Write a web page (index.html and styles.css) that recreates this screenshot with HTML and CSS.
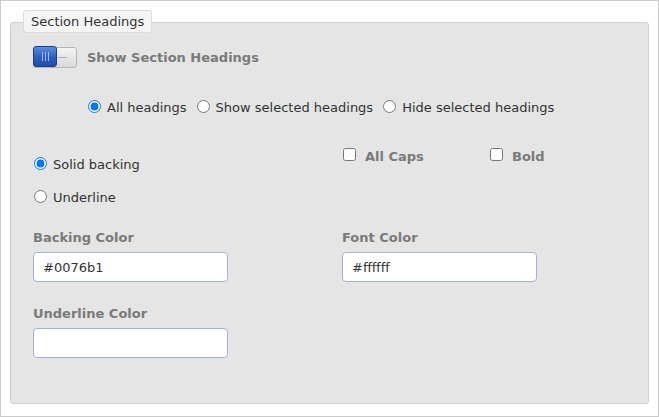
FILE: index.html
```html
<!DOCTYPE html>
<html>
<head>
<meta charset="utf-8">
<link rel="stylesheet" href="styles.css">
</head>
<body>
<div class="frame">
  <div class="legend">Section Headings</div>
  <div class="panel">
    <div class="toggle-row">
      <span class="toggle"><span class="knob"><i></i><i></i><i></i></span><span class="dash"></span></span>
      <span class="bold-label">Show Section Headings</span>
    </div>
    <div class="radio-row">
      <label class="opt"><input type="radio" name="h" checked> All headings</label>
      <label class="opt"><input type="radio" name="h"> Show selected headings</label>
      <label class="opt"><input type="radio" name="h"> Hide selected headings</label>
    </div>
    <div class="grid">
      <div class="col">
        <label class="opt stack first"><input type="radio" name="s" checked> Solid backing</label>
        <label class="opt stack"><input type="radio" name="s"> Underline</label>
      </div>
      <div class="col checks">
        <label class="chk"><input type="checkbox"> <span class="bold-label">All Caps</span></label>
        <label class="chk"><input type="checkbox"> <span class="bold-label">Bold</span></label>
      </div>
      <div class="field">
        <div class="bold-label">Backing Color</div>
        <input class="text" type="text" value="#0076b1">
      </div>
      <div class="field">
        <div class="bold-label">Font Color</div>
        <input class="text" type="text" value="#ffffff">
      </div>
      <div class="field third">
        <div class="bold-label">Underline Color</div>
        <input class="text" type="text" value="">
      </div>
    </div>
  </div>
</div>
</body>
</html>
```
FILE: styles.css
```css
html, body { margin: 0; padding: 0; background: #fff; }
body { font-family: "DejaVu Sans", Verdana, sans-serif; font-size: 13px; color: #333; }
.frame {
  width: 659px; height: 417px; box-sizing: border-box;
  border: 1px solid #ccc; padding: 9px 9px 0 9px;
}
.legend {
  position: relative; z-index: 1;
  display: inline-block; margin-left: 13px;
  height: 21px; line-height: 21px; padding: 0 7px;
  background: #f5f5f5; border: 1px solid #dcdcdc; border-radius: 3px;
  color: #333;
}
.panel {
  margin-top: -11px;
  height: 382px; box-sizing: border-box;
  background: #e5e5e5; border: 1px solid #cfcfcf; border-radius: 3px;
  padding: 23px 22px 0 22px;
}
.toggle-row { display: flex; align-items: center; height: 22px; }
.toggle {
  display: flex; align-items: center;
  width: 44px; height: 21px; box-sizing: border-box;
  border: 1px solid #b5b5b5; border-radius: 3px;
  background: linear-gradient(#f4f4f4, #d9d9d9);
  margin-right: 10px;
}
.knob {
  display: flex; justify-content: center; align-items: center; gap: 2px;
  width: 24px; height: 21px; margin: -1px 0 0 -1px; box-sizing: border-box;
  border: 1px solid #1c3d8c; border-radius: 3px;
  background: linear-gradient(#5c8ee0, #2c5cc0 55%, #1f4ea8);
}
.knob i { display: block; width: 1px; height: 9px; background: #9db8ee; }
.dash { display: block; width: 9px; height: 1px; background: #b0b0b0; margin-left: 1px; }
.bold-label { font-weight: bold; color: #7a7a7a; }
.radio-row { display: flex; margin-top: 29px; padding-left: 54px; gap: 9px; height: 20px; align-items: center; }
.opt { display: inline-flex; align-items: center; white-space: nowrap; }
.opt input, .chk input { margin: 0 6px 2px 1px; width: 13px; height: 13px; accent-color: #0075ff; }
.grid { display: grid; grid-template-columns: 309px 1fr; margin-top: 30px; }
.col { display: flex; flex-direction: column; }
.stack { height: 20px; }
.stack + .stack { margin-top: 13px; }
.first { margin-top: 7px; }
.checks { flex-direction: row; align-items: flex-start; padding-top: 0; }
.chk { display: inline-flex; align-items: center; height: 18px; width: 147px; }
.chk input { margin-right: 9px; margin-bottom: 4px; }
.field { margin-top: 23px; }
.field.third { margin-top: 24px; }
.field .bold-label { height: 16px; line-height: 16px; }
.text {
  display: block; margin-top: 6px;
  width: 195px; height: 30px; box-sizing: border-box;
  border: 1px solid #a3b0d8; border-radius: 4px; background: #fff;
  padding: 0 9px; font: 13px "DejaVu Sans", Verdana, sans-serif; color: #333;
  outline: none;
}
```
